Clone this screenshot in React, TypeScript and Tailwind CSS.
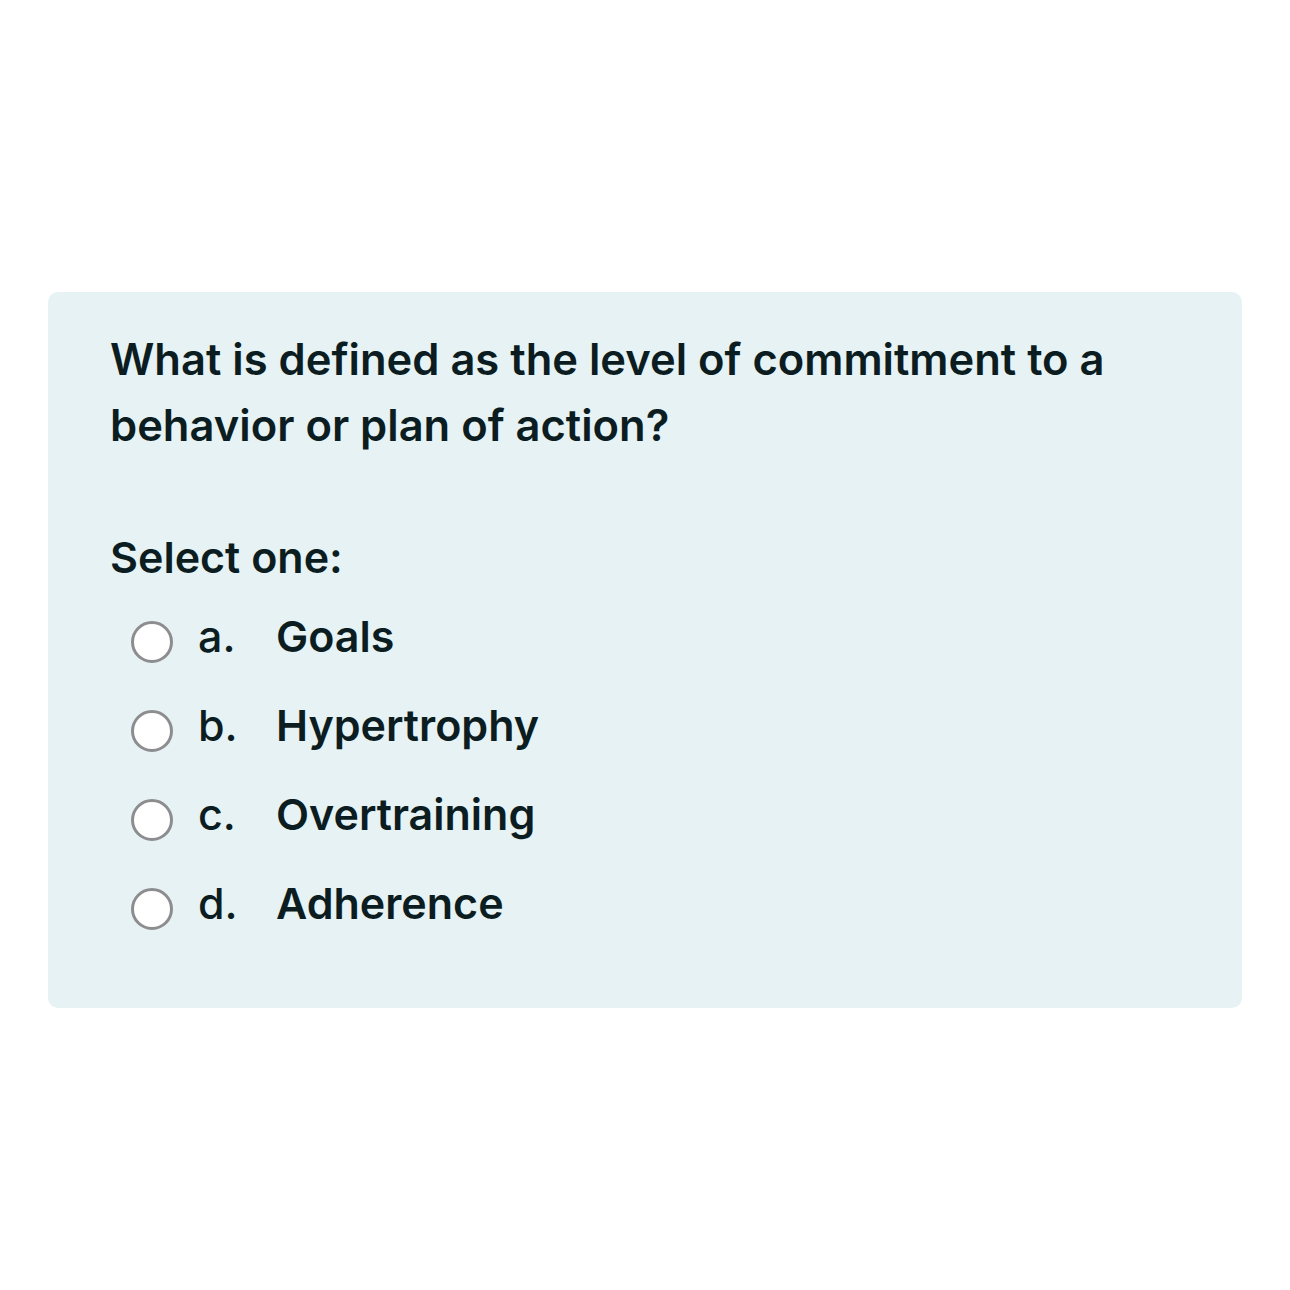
import React from "react";

const options = [
  { l: "a.", t: "Goals" },
  { l: "b.", t: "Hypertrophy" },
  { l: "c.", t: "Overtraining" },
  { l: "d.", t: "Adherence" },
];

export default function App() {
  return (
    <div
      className="w-[1290px] h-[1290px] bg-white pt-[292px] px-[48px]"
      style={{ fontFamily: "Inter, 'Noto Sans', sans-serif" }}
    >
      <div className="w-[1194px] h-[716px] rounded-[10px] bg-[#e6f2f4] pl-[62px] pr-[40px] pt-[34px] text-[#0c1d22]">
        <p className="text-[43.5px] leading-[66px] font-semibold">
          What is defined as the level of commitment to a behavior or plan of action?
        </p>
        <p className="mt-[66px] text-[43px] leading-[66px] font-semibold">Select one:</p>
        <div className="flex flex-col mt-[2px]">
          {options.map((o) => (
            <div key={o.l} className="flex items-center h-[89px]">
              <div className="ml-[21px] mt-[10px] w-[42px] h-[42px] rounded-full border-[3.5px] border-[#8d8d8f] bg-white" />
              <span className="ml-[25px] w-[78px] text-[43px] font-medium">{o.l}</span>
              <span className="text-[43px] font-semibold">{o.t}</span>
            </div>
          ))}
        </div>
      </div>
    </div>
  );
}
